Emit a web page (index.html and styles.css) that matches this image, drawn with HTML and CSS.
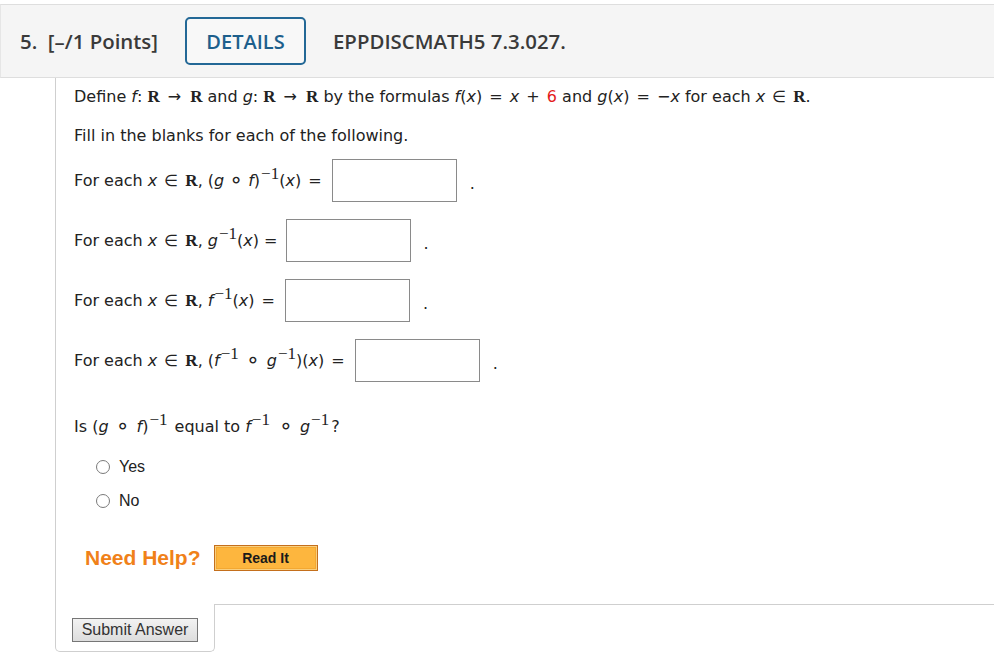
FILE: index.html
```html
<!DOCTYPE html>
<html lang="en">
<head>
<meta charset="utf-8">
<title>EPPDISCMATH5 7.3.027</title>
<link rel="stylesheet" href="styles.css">
</head>
<body>
<div class="header">
  <span class="qnum">5.&nbsp; [–/1 Points]</span>
  <span class="details">DETAILS</span>
  <span class="qcode">EPPDISCMATH5 7.3.027.</span>
</div>
<div class="question">
  <div class="body">
    <p class="line">Define <i>f</i>: <b class="set">R</b><span class="arr">→</span><b class="set">R</b> and <i>g</i>: <b class="set">R</b><span class="arr">→</span><b class="set">R</b> by the formulas <i>f</i>(<i>x</i>) <span class="op">=</span> <i>x</i> <span class="op">+</span> <span class="red">6</span> and <i>g</i>(<i>x</i>) <span class="op">=</span> −<i>x</i> for each <i>x</i> <span class="op">∈</span> <b class="set">R</b>.</p>
    <p class="line fill">Fill in the blanks for each of the following.</p>
    <div class="row first">
      <span>For each <i>x</i> <span class="op">∈</span> <b class="set">R</b>, (<i>g</i> <span class="comp">∘</span> <i>f</i>)<span class="sup">−1</span>(<i>x</i>) <span class="op">=</span></span>
      <span class="blank"></span><span class="dot">.</span>
    </div>
    <div class="row">
      <span>For each <i>x</i> <span class="op">∈</span> <b class="set">R</b>, <i>g</i><span class="sup">−1</span>(<i>x</i>) <span class="op narrow">=</span></span>
      <span class="blank"></span><span class="dot">.</span>
    </div>
    <div class="row">
      <span>For each <i>x</i> <span class="op">∈</span> <b class="set">R</b>, <i>f</i><span class="sup">−1</span>(<i>x</i>) <span class="op">=</span></span>
      <span class="blank"></span><span class="dot">.</span>
    </div>
    <div class="row">
      <span>For each <i>x</i> <span class="op">∈</span> <b class="set">R</b>, (<i>f</i><span class="sup">−1</span> <span class="comp wide">∘</span> <i>g</i><span class="sup">−1</span>)(<i>x</i>) <span class="op">=</span></span>
      <span class="blank"></span><span class="dot">.</span>
    </div>
    <p class="line ask">Is (<i>g</i> <span class="comp wide">∘</span> <i>f</i>)<span class="sup">−1</span> equal to <i>f</i><span class="sup">−1</span> <span class="comp wide">∘</span> <i>g</i><span class="sup">−1</span>?</p>
    <div class="choices">
      <label class="choice"><span class="radio"></span>Yes</label>
      <label class="choice no"><span class="radio"></span>No</label>
    </div>
    <div class="help">
      <span class="need">Need Help?</span>
      <span class="readit">Read It</span>
    </div>
  </div>
  <div class="footer">
    <div class="tab"><span class="submit">Submit Answer</span></div>
    <div class="rest"></div>
  </div>
</div>
</body>
</html>
```
FILE: styles.css
```css
* { box-sizing: border-box; }
body {
  margin: 0;
  background: #fff;
  color: #222;
  font-family: "DejaVu Sans", Verdana, sans-serif;
}
.header {
  margin-top: 4px;
  height: 74px;
  border-top: 1px solid #dedede;
  border-bottom: 1px solid #dedede;
  border-left: 1px solid #e6e6e6;
  background: #f5f5f5;
  display: flex;
  align-items: center;
  gap: 27px;
  padding-left: 19px;
  font-family: "Open Sans", sans-serif;
  color: #3a3a3a;
}
.qnum, .qcode {
  font-size: 20.4px;
  font-weight: 600;
}
.details {
  width: 121px;
  height: 48px;
  border: 2px solid #236896;
  border-radius: 5px;
  display: flex;
  align-items: center;
  justify-content: center;
  font-size: 20px;
  font-weight: 600;
  color: #1d5f8c;
  background: #f8f8f8;
}
.question { margin-left: 55px; }
.body {
  border-left: 1px solid #cfcfcf;
  padding: 9px 0 33px 18px;
  font-size: 16px;
}
.line { margin: 0; line-height: 20px; }
.fill { margin-top: 19px; }
.set { font-family: "Liberation Serif", "Times New Roman", serif; font-weight: bold; font-size: 17px; }
i { font-style: italic; }
.red { color: #e41b1b; }
.arr { padding: 0 9px 0 8px; }
.op { padding: 0 2px; }
.op.narrow { padding: 0; }
.comp { font-size: 22px; line-height: 0; position: relative; top: 1px; }
.comp.wide { padding: 0 2px; }
.sup {
  font-family: "Liberation Serif", serif;
  font-size: 17px;
  position: relative;
  top: -7px;
  line-height: 0;
  padding-left: 1px;
}
.ask .sup { padding-right: 2px; }
.row {
  display: flex;
  align-items: center;
  height: 43px;
  margin-top: 17px;
}
.row.first { margin-top: 13px; }
.blank {
  width: 125px;
  height: 43px;
  border: 1px solid #8a8a8a;
  background: #fff;
  margin-left: 8px;
}
.dot { margin-left: 13px; padding-top: 6px; }
.ask { margin-top: 35px; }
.choices {
  margin-top: 20px;
  padding-left: 22px;
  font-family: Arial, "Liberation Sans", sans-serif;
  font-size: 16px;
}
.choice {
  display: flex;
  align-items: center;
  height: 20px;
  gap: 9px;
}
.choice.no { margin-top: 14px; }
.radio {
  width: 14px;
  height: 14px;
  border: 1px solid #7a7a7a;
  border-radius: 50%;
  background: #fff;
}
.help {
  margin-top: 34px;
  padding-left: 11px;
  display: flex;
  align-items: center;
  gap: 13px;
  height: 26px;
}
.need {
  font-family: Arial, "Liberation Sans", sans-serif;
  font-weight: bold;
  font-size: 21px;
  color: #f08119;
}
.readit {
  width: 104px;
  height: 26px;
  border: 1px solid #c46f1c;
  box-shadow: inset 0 0 0 1px #f9cf7e, inset 0 0 0 2px #f3a832;
  background: #fdb63e;
  display: flex;
  align-items: center;
  justify-content: center;
  font-family: Arial, "Liberation Sans", sans-serif;
  font-weight: bold;
  font-size: 14px;
  color: #1a1a1a;
}
.footer { display: flex; }
.tab {
  width: 160px;
  height: 48px;
  border-left: 1px solid #cfcfcf;
  border-right: 1px solid #cfcfcf;
  border-bottom: 1px solid #cfcfcf;
  border-radius: 0 0 5px 5px;
  padding: 14px 0 0 16px;
}
.rest { flex: 1; border-top: 1px solid #cfcfcf; }
.submit {
  display: inline-flex;
  align-items: center;
  justify-content: center;
  width: 126px;
  height: 24px;
  border: 1px solid #767676;
  background: linear-gradient(#f2f2f2, #dddddd);
  font-family: Arial, "Liberation Sans", sans-serif;
  font-size: 16px;
  color: #333;
}
```
